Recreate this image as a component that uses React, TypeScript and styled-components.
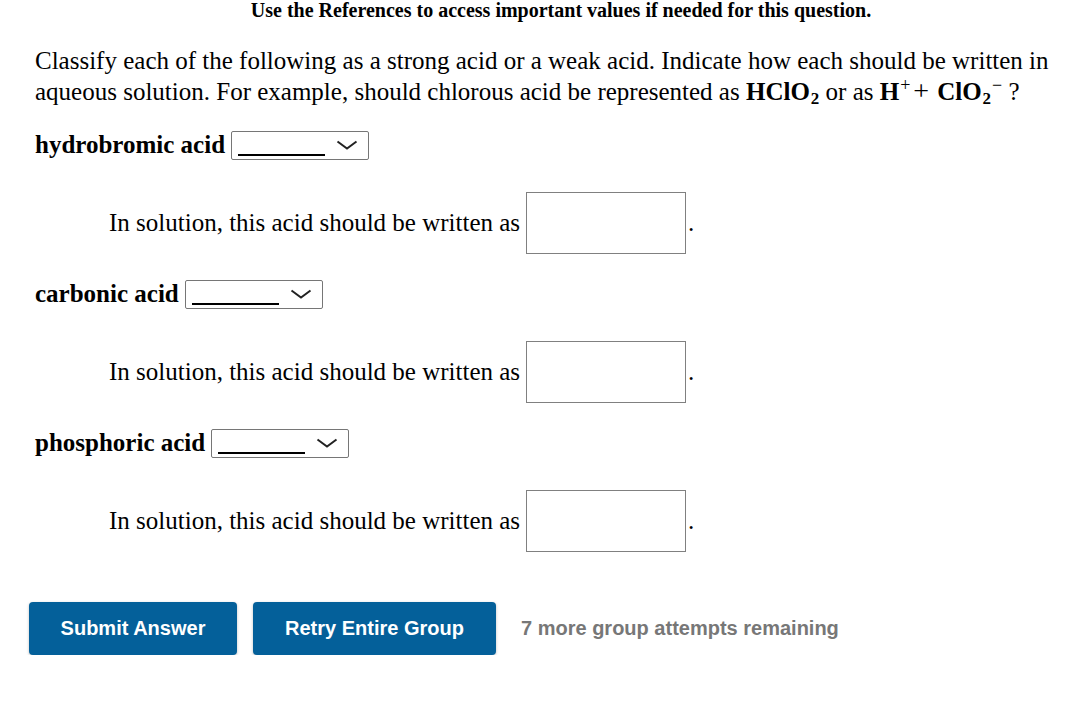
import React from "react";
import styled, { createGlobalStyle } from "styled-components";

const Global = createGlobalStyle`
  html, body { margin: 0; padding: 0; background: #fff; }
  body { font-family: "Liberation Serif", "Times New Roman", serif; color: #000; }
`;

const Page = styled.div`
  padding: 0 0 0 35px;
`;

const Header = styled.div`
  text-align: center;
  font-weight: bold;
  font-size: 20px;
  line-height: 20px;
  padding-top: 0px;
`;

const Question = styled.p`
  margin: 25px 0 0 0;
  font-size: 25px;
  line-height: 31px;
  padding-right: 20px;
`;

const Chem = styled.span`
  font-family: "Liberation Serif", serif;
  font-weight: bold;
  font-size: 25px;
  line-height: 0;
`;

const Plus = styled.span`
  font-family: "Liberation Serif", serif;
  font-weight: normal;
  font-size: 28px;
  line-height: 0;
  margin: 0 8px 0 3px;
`;

const Sub = styled.sub`
  font-size: 17px;
  vertical-align: -4px;
  line-height: 0;
  margin-left: 1px;
`;

const Sup = styled.sup`
  font-size: 18px;
  font-weight: normal;
  vertical-align: 9px;
  line-height: 0;
  margin-left: 1px;
`;

const Group = styled.div`
  display: flex;
  flex-direction: column;
`;

const LabelRow = styled.div<{ $first?: boolean }>`
  display: flex;
  align-items: center;
  gap: 6px;
  margin-top: ${(p) => (p.$first ? "24px" : "27px")};
  height: 28px;
`;

const Label = styled.span`
  font-weight: bold;
  font-size: 25px;
`;

const Select = styled.div`
  box-sizing: border-box;
  width: 138px;
  height: 29px;
  border: 1px solid #767676;
  border-radius: 2px;
  display: flex;
  align-items: center;
  justify-content: space-between;
  padding: 0 10px 0 6px;
  background: #fff;
`;

const Blank = styled.span`
  display: block;
  align-self: flex-end;
  width: 87px;
  height: 0;
  border-bottom: 2px solid #000;
  margin-bottom: 3px;
`;

const Chevron = styled.svg`
  width: 22px;
  height: 10px;
  margin-top: -1px;
`;

const SolutionRow = styled.div`
  display: flex;
  align-items: center;
  margin-top: 33px;
  padding-left: 74px;
  font-size: 25px;
  height: 61px;
`;

const Input = styled.div`
  box-sizing: border-box;
  width: 160px;
  height: 62px;
  border: 1px solid #808080;
  margin-left: 6px;
  background: #fff;
`;

const Dot = styled.span`
  font-size: 25px;
  margin-left: 2px;
`;

const Actions = styled.div`
  display: flex;
  align-items: center;
  gap: 16px;
  margin-top: 51px;
  margin-left: -6px;
`;

const Button = styled.button<{ $w: number }>`
  box-sizing: border-box;
  width: ${(p) => p.$w}px;
  height: 53px;
  background: #04609a;
  color: #fff;
  border: none;
  border-radius: 4px;
  font-family: "Liberation Sans", Arial, sans-serif;
  font-weight: bold;
  font-size: 20px;
  box-shadow: 0 1px 3px rgba(0, 0, 0, 0.25);
  cursor: pointer;
  padding: 0;
`;

const Remaining = styled.span`
  font-family: "Liberation Sans", Arial, sans-serif;
  font-weight: bold;
  font-size: 20px;
  color: #777;
  margin-left: 9px;
`;

const acids = ["hydrobromic acid", "carbonic acid", "phosphoric acid"];

function Dropdown() {
  return (
    <Select>
      <Blank />
      <Chevron viewBox="0 0 22 10">
        <polyline points="1.5,1.5 11,8.5 20.5,1.5" fill="none" stroke="#222" strokeWidth="2" />
      </Chevron>
    </Select>
  );
}

export default function App() {
  return (
    <>
      <Global />
      <Page>
        <Header>Use the References to access important values if needed for this question.</Header>
        <Question>
          Classify each of the following as a strong acid or a weak acid. Indicate how each should be written in
          aqueous solution. For example, should chlorous acid be represented as{" "}
          <Chem>
            HClO<Sub>2</Sub>
          </Chem>{" "}
          or as{" "}
          <Chem>
            H<Sup>+</Sup>
          </Chem>
          <Plus>+</Plus>
          <Chem>
            ClO<Sub>2</Sub>
            <Sup>−</Sup>
          </Chem>{" "}
          ?
        </Question>
        {acids.map((a, i) => (
          <Group key={a}>
            <LabelRow $first={i === 0}>
              <Label>{a}</Label>
              <Dropdown />
            </LabelRow>
            <SolutionRow>
              In solution, this acid should be written as
              <Input />
              <Dot>.</Dot>
            </SolutionRow>
          </Group>
        ))}
        <Actions>
          <Button $w={208}>Submit Answer</Button>
          <Button $w={243}>Retry Entire Group</Button>
          <Remaining>7 more group attempts remaining</Remaining>
        </Actions>
      </Page>
    </>
  );
}
